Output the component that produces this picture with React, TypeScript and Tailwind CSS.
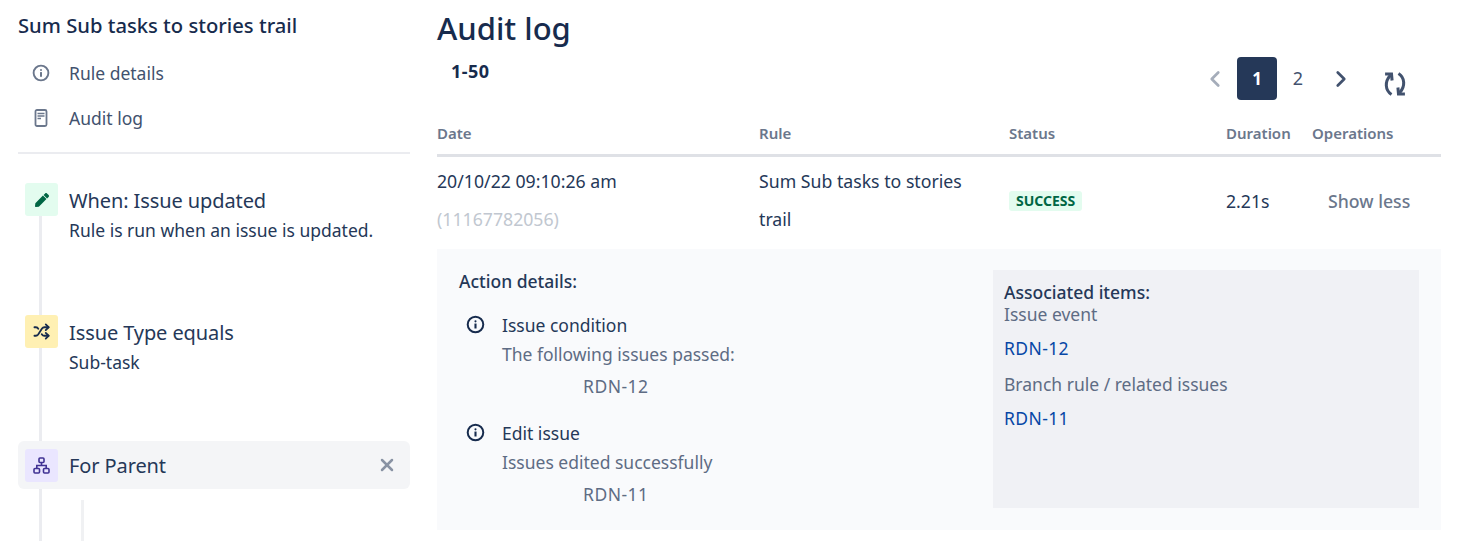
import { Shuffle, X, ChevronLeft, ChevronRight } from "lucide-react"
import { FaPen } from "react-icons/fa"

const columns = "grid grid-cols-[322px_250px_217px_86px_129px]"

const InfoIcon = ({ size, className }: { size: number, className: string }) => (
    <svg width={size} height={size} viewBox="0 0 20 20" fill="none" className={`shrink-0 ${className}`}>
        <circle cx="10" cy="10" r="8.2" stroke="currentColor" strokeWidth="2.1" />
        <rect x="8.9" y="9" width="2.2" height="5.2" fill="currentColor" />
        <rect x="8.9" y="5.6" width="2.2" height="2.2" rx="1.1" fill="currentColor" />
    </svg>
)

const LogIcon = () => (
    <svg width="18" height="18" viewBox="0 0 18 18" fill="none" className="shrink-0 text-[#6b778c]">
        <rect x="3.5" y="1" width="11" height="16" rx="1.5" stroke="currentColor" strokeWidth="1.8" />
        <path d="M5.5 4.5h7M5.5 7h7M5.5 9.5h3.5" stroke="currentColor" strokeWidth="1.5" />
    </svg>
)

const TreeIcon = () => (
    <svg width="17" height="17" viewBox="0 0 17 17" fill="none" className="text-[#403294]">
        <rect x="6" y="1" width="5" height="4.5" rx="1" stroke="currentColor" strokeWidth="1.6" />
        <rect x="1" y="11.5" width="5.5" height="4.5" rx="1" stroke="currentColor" strokeWidth="1.6" />
        <rect x="10.5" y="11.5" width="5.5" height="4.5" rx="1" stroke="currentColor" strokeWidth="1.6" />
        <path d="M8.5 5.5v3M3.8 11.5V8.5h9.4v3" stroke="currentColor" strokeWidth="1.6" />
    </svg>
)

const ReloadIcon = () => (
    <svg width="28" height="28" viewBox="0 0 24 24" fill="none" stroke="currentColor" strokeWidth="2.6" className="text-[#42526e] mt-[13px] ml-[27px]">
        <path d="M9 21C3.5 17.5 3 10 8 4.5" />
        <path d="M3.5 3.5L9 3.5L9.5 9" />
        <path d="M15 3C20.5 6.5 21 14 16 19.5" />
        <path d="M20.5 20.5L15 20.5L14.5 15" />
    </svg>
)

const Trigger = ({ bg, icon, title, sub, className }: { bg: string, icon: React.ReactNode, title: string, sub: string, className: string }) => (
    <div className={`flex gap-[11px] pl-[7px] ${className}`}>
        <div className={`w-[33px] h-[33px] rounded-[3px] flex items-center justify-center shrink-0 ${bg}`}>{icon}</div>
        <div className="pt-[2px]">
            <div className="text-[20px] tracking-[-0.1px] leading-[32px] text-[#253858]">{title}</div>
            <div className="text-[17.5px] leading-[26px] text-[#253858]">{sub}</div>
        </div>
    </div>
)

const Detail = ({ title, sub, issue }: { title: string, sub: string, issue: string }) => (
    <div className="flex gap-[17px] pl-[6px]">
        <div className="pt-[5px] pl-[1px]"><InfoIcon size={19} className="text-[#172b4d]" /></div>
        <div>
            <div className="text-[17.5px] leading-[30px] text-[#253858]">{title}</div>
            <div className="text-[17.5px] leading-[28px] text-[#5e6c84]">{sub}</div>
            <div className="text-[17.5px] tracking-[0.5px] leading-[36px] text-[#5e6c84] pl-[81px]">{issue}</div>
        </div>
    </div>
)

export default function App() {
    return (
        <div className="w-[1482px] h-[541px] overflow-hidden bg-white flex font-['Noto_Sans',sans-serif] text-[#172b4d]">
            <aside className="relative w-[392px] ml-[18px] shrink-0">
                <div className="absolute left-[21px] top-[215px] bottom-0 w-[3px] bg-[#ebecf0]" />
                <div className="absolute left-[63px] top-[500px] bottom-0 w-[3px] bg-[#f0f1f3]" />

                <h2 className="text-[20.2px] leading-[28px] font-medium text-[#172b4d] pt-[11px]">Sum Sub tasks to stories trail</h2>
                <div className="flex items-center gap-[19px] pl-[14px] mt-[20px] h-[28px] text-[#42526e]">
                    <InfoIcon size={18} className="text-[#6b778c]" />
                    <span className="text-[17.5px]">Rule details</span>
                </div>
                <div className="flex items-center gap-[19px] pl-[14px] mt-[17px] h-[28px] text-[#42526e]">
                    <LogIcon />
                    <span className="text-[17.5px]">Audit log</span>
                </div>
                <div className="h-[2px] bg-[#ebecf0] mt-[20px]" />

                <Trigger
                    className="relative mt-[29px] h-[132px]"
                    bg="bg-[#e3fcef]"
                    icon={<FaPen size={14} className="text-[#006644]" />}
                    title="When: Issue updated"
                    sub="Rule is run when an issue is updated."
                />
                <Trigger
                    className="relative h-[126px]"
                    bg="bg-[#fff0b3]"
                    icon={<Shuffle size={17} strokeWidth={2.5} className="text-[#172b4d]" />}
                    title="Issue Type equals"
                    sub="Sub-task"
                />
                <div className="relative h-[48px] rounded-[6px] bg-[#f4f5f7] flex items-center pl-[7px] pr-[13px]">
                    <div className="w-[33px] h-[33px] rounded-[3px] bg-[#eae6ff] flex items-center justify-center shrink-0">
                        <TreeIcon />
                    </div>
                    <span className="ml-[11px] pt-[2px] text-[20px] tracking-[-0.1px] text-[#253858] flex-1">For Parent</span>
                    <X size={20} strokeWidth={3} className="text-[#8993a4]" />
                </div>
            </aside>

            <main className="ml-[27px] w-[1004px] shrink-0">
                <h1 className="text-[31px] leading-[40px] font-medium text-[#172b4d] pt-[8px]">Audit log</h1>
                <div className="flex justify-between h-[64px]">
                    <span className="text-[18px] tracking-[0.5px] font-bold text-[#172b4d] pl-[14px] leading-[24px] pt-[11px]">1-50</span>
                    <div className="flex items-start pr-[32px] mt-[9px]">
                        <ChevronLeft size={26} strokeWidth={2.5} className="text-[#a5adba] mt-[9px] mr-[9px]" />
                        <div className="w-[40px] h-[43px] rounded-[4px] bg-[#253858] text-white font-bold text-[17px] flex items-center justify-center">1</div>
                        <div className="w-[42px] h-[43px] text-[#42526e] text-[18px] flex items-center justify-center">2</div>
                        <ChevronRight size={26} strokeWidth={2.5} className="text-[#42526e] mt-[9px] ml-[9px]" />
                        <ReloadIcon />
                    </div>
                </div>

                <div className={`${columns} h-[42px] items-center text-[15px] font-semibold text-[#6b778c] border-b-[3px] border-[#dfe1e6] box-content`}>
                    <span>Date</span>
                    <span>Rule</span>
                    <span>Status</span>
                    <span>Duration</span>
                    <span>Operations</span>
                </div>

                <div className={`${columns} h-[92px] pb-[4px] items-center text-[17.7px] text-[#253858]`}>
                    <div className="leading-[38px] pb-[2px]">
                        <div>20/10/22 09:10:26 am</div>
                        <div className="text-[#c1c7d0]">(11167782056)</div>
                    </div>
                    <div className="leading-[38px] pb-[2px] w-[230px]">Sum Sub tasks to stories trail</div>
                    <div className="flex items-center">
                        <span className="bg-[#e3fcef] text-[#006644] text-[14px] font-bold leading-[20px] px-[7px] rounded-[3px]">SUCCESS</span>
                    </div>
                    <div>2.21s</div>
                    <div className="text-[#6b778c] font-medium pl-[16px]">Show less</div>
                </div>

                <div className="h-[281px] bg-[#f9fafc] flex justify-between pl-[22px] pr-[22px] pt-[21px]">
                    <div className="-mt-[1px]">
                        <div className="text-[17.5px] leading-[24px] font-medium text-[#253858] mb-[17px]">Action details:</div>
                        <div className="flex flex-col gap-[14px]">
                            <Detail title="Issue condition" sub="The following issues passed:" issue="RDN-12" />
                            <Detail title="Edit issue" sub="Issues edited successfully" issue="RDN-11" />
                        </div>
                    </div>
                    <div className="w-[426px] h-[238px] bg-[#f0f1f5] px-[11px] pt-[10px] text-[17.5px]">
                        <div className="font-medium leading-[24px] text-[#253858]">Associated items:</div>
                        <div className="leading-[22px] -mt-[1px] text-[#5e6c84]">Issue event</div>
                        <div className="leading-[46px] tracking-[0.4px] text-[#0747a6]">RDN-12</div>
                        <div className="leading-[26px] text-[#5e6c84]">Branch rule / related issues</div>
                        <div className="leading-[42px] tracking-[0.4px] text-[#0747a6]">RDN-11</div>
                    </div>
                </div>
            </main>
        </div>
    )
}
